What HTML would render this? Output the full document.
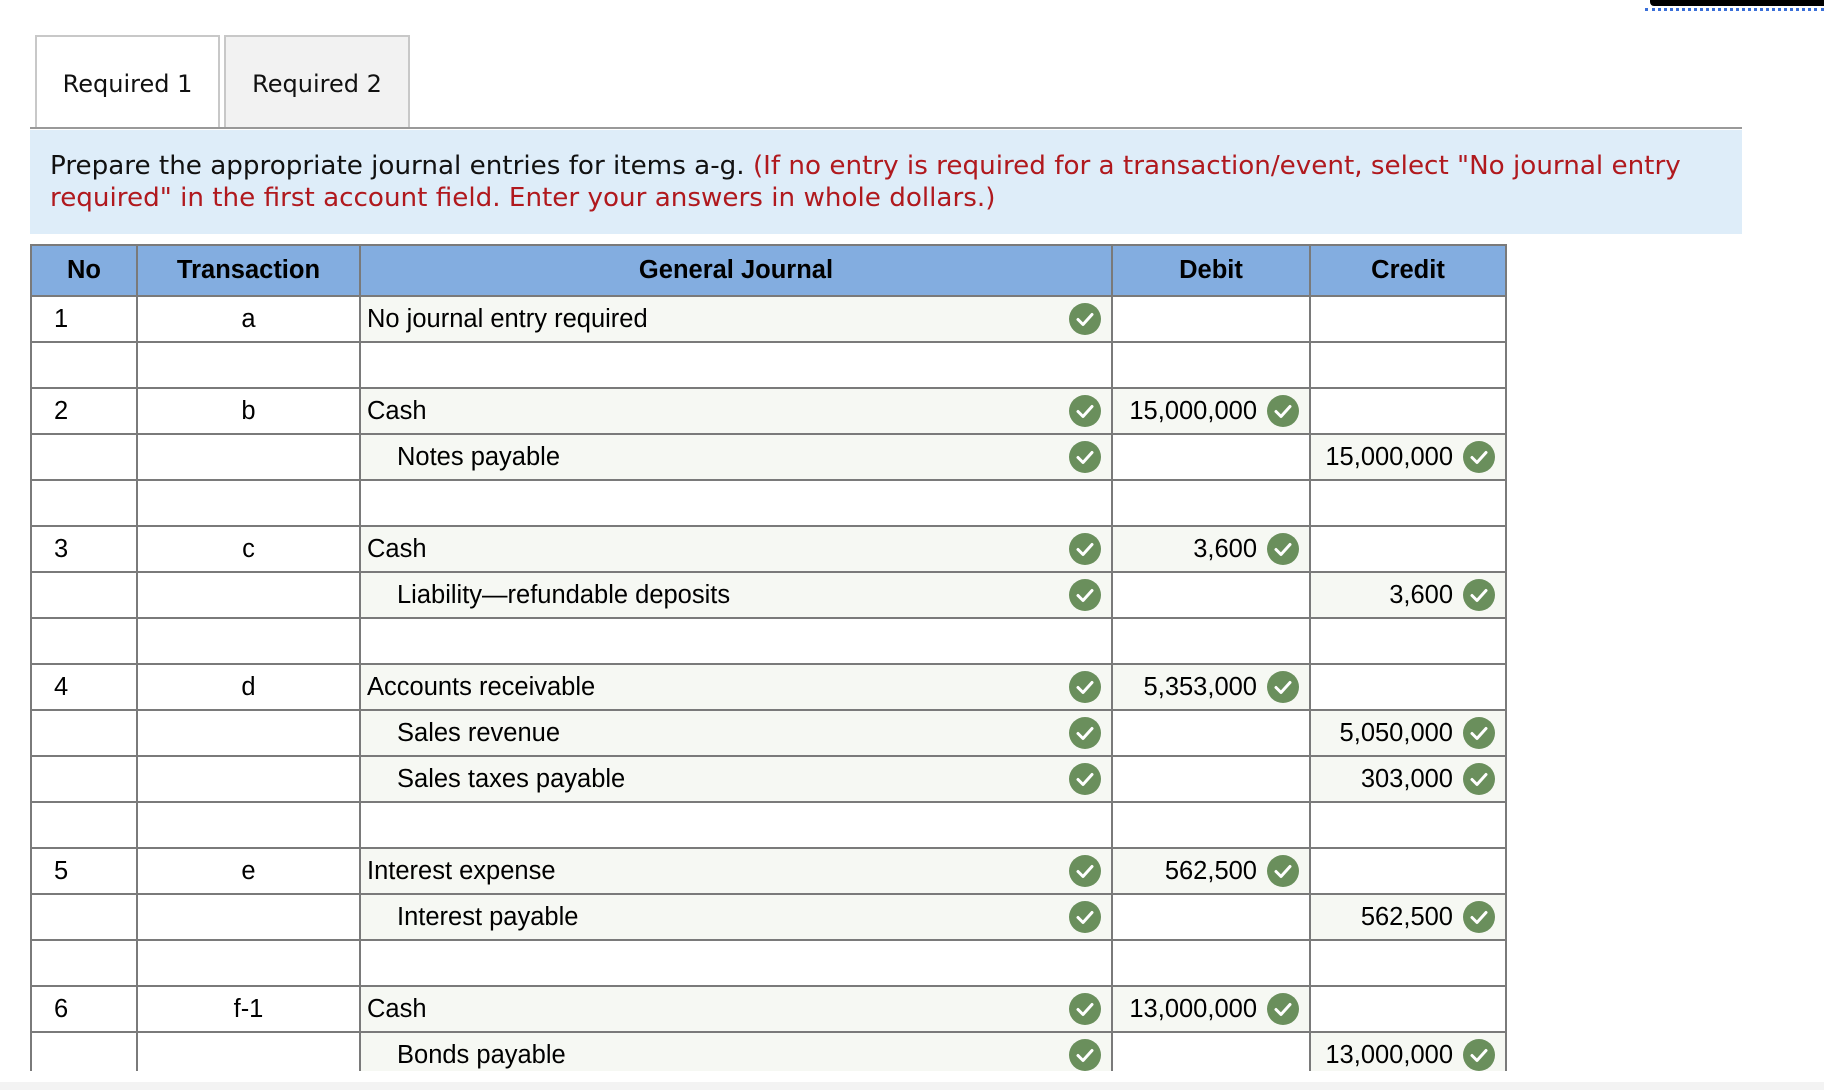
<!DOCTYPE html>
<html><head><meta charset="utf-8"><style>
body{margin:0;width:1824px;height:1090px;background:#fff;position:relative;overflow:hidden;font-family:"Liberation Sans",Arial,sans-serif}
.tab{position:absolute;top:35px;height:93px;box-sizing:border-box;border:2px solid #c8c8c8;border-bottom:none;font-family:"DejaVu Sans",Verdana,sans-serif;font-size:24px;text-align:center;line-height:94px;color:#111}
#t1{left:35px;width:185px;background:#fff}
#t2{left:224px;width:186px;background:#f2f2f2}
#line{position:absolute;left:30px;top:127px;width:1712px;height:2px;background:#999}
#inst{position:absolute;left:30px;top:130px;width:1712px;height:104px;box-sizing:border-box;background:#deedf9;padding:20px 0 0 20px;font-family:"DejaVu Sans",Verdana,sans-serif;font-size:26.2px;line-height:32px;color:#111}
#inst span{color:#b0191e}
table{position:absolute;left:30px;top:244px;border-collapse:collapse;table-layout:fixed;font-size:25.5px}
td,th{border:2px solid #7a7a7a;height:44px;padding:0 6px;white-space:nowrap;position:relative}
td:first-child{padding-left:22px}
th{background:#83ade0;height:49px;font-weight:bold;text-align:center;color:#000}
th:first-child{padding-left:6px}
td.c{text-align:center}
td.f{background:#f6f8f3}
td.r{text-align:right;padding-right:52px}
.in{padding-left:36px}
.ck{position:absolute;right:10px;top:50%;margin-top:-16px;width:32px;height:32px;border-radius:50%;background:#6a8f5c}
.ck svg{position:absolute;left:0;top:0}
#top{position:absolute;left:1650px;top:0;width:174px;height:6px;background:#000;border-radius:0 0 0 4px}
#dot{position:absolute;left:1645px;top:8px;width:179px;border-top:3px dotted #3a6fd8}
#bot{position:absolute;left:0;top:1082px;width:1824px;height:8px;background:#f3f3f3}
</style></head><body>
<div id="top"></div><div id="dot"></div>
<div class="tab" id="t1">Required 1</div>
<div class="tab" id="t2">Required 2</div>
<div id="line"></div>
<div id="inst">Prepare the appropriate journal entries for items a-g. <span>(If no entry is required for a transaction/event, select "No journal entry required" in the first account field. Enter your answers in whole dollars.)</span></div>
<table>
<colgroup><col style="width:106px"><col style="width:223px"><col style="width:752px"><col style="width:198px"><col style="width:196px"></colgroup>
<tr><th>No</th><th>Transaction</th><th>General Journal</th><th>Debit</th><th>Credit</th></tr>
<tr><td>1</td><td class="c">a</td><td class="f">No journal entry required<i class="ck"><svg width="32" height="32"><path d="M9 16.5l5 5 9-10" stroke="#fff" stroke-width="3" fill="none" stroke-linecap="round" stroke-linejoin="round"/></svg></i></td><td></td><td></td></tr>
<tr><td></td><td></td><td></td><td></td><td></td></tr>
<tr><td>2</td><td class="c">b</td><td class="f">Cash<i class="ck"><svg width="32" height="32"><path d="M9 16.5l5 5 9-10" stroke="#fff" stroke-width="3" fill="none" stroke-linecap="round" stroke-linejoin="round"/></svg></i></td><td class="f r">15,000,000<i class="ck"><svg width="32" height="32"><path d="M9 16.5l5 5 9-10" stroke="#fff" stroke-width="3" fill="none" stroke-linecap="round" stroke-linejoin="round"/></svg></i></td><td></td></tr>
<tr><td></td><td></td><td class="f in">Notes payable<i class="ck"><svg width="32" height="32"><path d="M9 16.5l5 5 9-10" stroke="#fff" stroke-width="3" fill="none" stroke-linecap="round" stroke-linejoin="round"/></svg></i></td><td></td><td class="f r">15,000,000<i class="ck"><svg width="32" height="32"><path d="M9 16.5l5 5 9-10" stroke="#fff" stroke-width="3" fill="none" stroke-linecap="round" stroke-linejoin="round"/></svg></i></td></tr>
<tr><td></td><td></td><td></td><td></td><td></td></tr>
<tr><td>3</td><td class="c">c</td><td class="f">Cash<i class="ck"><svg width="32" height="32"><path d="M9 16.5l5 5 9-10" stroke="#fff" stroke-width="3" fill="none" stroke-linecap="round" stroke-linejoin="round"/></svg></i></td><td class="f r">3,600<i class="ck"><svg width="32" height="32"><path d="M9 16.5l5 5 9-10" stroke="#fff" stroke-width="3" fill="none" stroke-linecap="round" stroke-linejoin="round"/></svg></i></td><td></td></tr>
<tr><td></td><td></td><td class="f in">Liability—refundable deposits<i class="ck"><svg width="32" height="32"><path d="M9 16.5l5 5 9-10" stroke="#fff" stroke-width="3" fill="none" stroke-linecap="round" stroke-linejoin="round"/></svg></i></td><td></td><td class="f r">3,600<i class="ck"><svg width="32" height="32"><path d="M9 16.5l5 5 9-10" stroke="#fff" stroke-width="3" fill="none" stroke-linecap="round" stroke-linejoin="round"/></svg></i></td></tr>
<tr><td></td><td></td><td></td><td></td><td></td></tr>
<tr><td>4</td><td class="c">d</td><td class="f">Accounts receivable<i class="ck"><svg width="32" height="32"><path d="M9 16.5l5 5 9-10" stroke="#fff" stroke-width="3" fill="none" stroke-linecap="round" stroke-linejoin="round"/></svg></i></td><td class="f r">5,353,000<i class="ck"><svg width="32" height="32"><path d="M9 16.5l5 5 9-10" stroke="#fff" stroke-width="3" fill="none" stroke-linecap="round" stroke-linejoin="round"/></svg></i></td><td></td></tr>
<tr><td></td><td></td><td class="f in">Sales revenue<i class="ck"><svg width="32" height="32"><path d="M9 16.5l5 5 9-10" stroke="#fff" stroke-width="3" fill="none" stroke-linecap="round" stroke-linejoin="round"/></svg></i></td><td></td><td class="f r">5,050,000<i class="ck"><svg width="32" height="32"><path d="M9 16.5l5 5 9-10" stroke="#fff" stroke-width="3" fill="none" stroke-linecap="round" stroke-linejoin="round"/></svg></i></td></tr>
<tr><td></td><td></td><td class="f in">Sales taxes payable<i class="ck"><svg width="32" height="32"><path d="M9 16.5l5 5 9-10" stroke="#fff" stroke-width="3" fill="none" stroke-linecap="round" stroke-linejoin="round"/></svg></i></td><td></td><td class="f r">303,000<i class="ck"><svg width="32" height="32"><path d="M9 16.5l5 5 9-10" stroke="#fff" stroke-width="3" fill="none" stroke-linecap="round" stroke-linejoin="round"/></svg></i></td></tr>
<tr><td></td><td></td><td></td><td></td><td></td></tr>
<tr><td>5</td><td class="c">e</td><td class="f">Interest expense<i class="ck"><svg width="32" height="32"><path d="M9 16.5l5 5 9-10" stroke="#fff" stroke-width="3" fill="none" stroke-linecap="round" stroke-linejoin="round"/></svg></i></td><td class="f r">562,500<i class="ck"><svg width="32" height="32"><path d="M9 16.5l5 5 9-10" stroke="#fff" stroke-width="3" fill="none" stroke-linecap="round" stroke-linejoin="round"/></svg></i></td><td></td></tr>
<tr><td></td><td></td><td class="f in">Interest payable<i class="ck"><svg width="32" height="32"><path d="M9 16.5l5 5 9-10" stroke="#fff" stroke-width="3" fill="none" stroke-linecap="round" stroke-linejoin="round"/></svg></i></td><td></td><td class="f r">562,500<i class="ck"><svg width="32" height="32"><path d="M9 16.5l5 5 9-10" stroke="#fff" stroke-width="3" fill="none" stroke-linecap="round" stroke-linejoin="round"/></svg></i></td></tr>
<tr><td></td><td></td><td></td><td></td><td></td></tr>
<tr><td>6</td><td class="c">f-1</td><td class="f">Cash<i class="ck"><svg width="32" height="32"><path d="M9 16.5l5 5 9-10" stroke="#fff" stroke-width="3" fill="none" stroke-linecap="round" stroke-linejoin="round"/></svg></i></td><td class="f r">13,000,000<i class="ck"><svg width="32" height="32"><path d="M9 16.5l5 5 9-10" stroke="#fff" stroke-width="3" fill="none" stroke-linecap="round" stroke-linejoin="round"/></svg></i></td><td></td></tr>
<tr><td></td><td></td><td class="f in">Bonds payable<i class="ck"><svg width="32" height="32"><path d="M9 16.5l5 5 9-10" stroke="#fff" stroke-width="3" fill="none" stroke-linecap="round" stroke-linejoin="round"/></svg></i></td><td></td><td class="f r">13,000,000<i class="ck"><svg width="32" height="32"><path d="M9 16.5l5 5 9-10" stroke="#fff" stroke-width="3" fill="none" stroke-linecap="round" stroke-linejoin="round"/></svg></i></td></tr>
</table>
<div style="position:absolute;left:0;top:1071px;width:1824px;height:19px;background:#fff"></div>
<div id="bot"></div>
</body></html>
